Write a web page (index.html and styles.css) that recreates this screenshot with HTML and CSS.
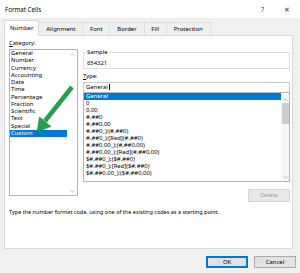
FILE: index.html
```html
<!DOCTYPE html>
<html lang="en">
<head>
  <meta charset="UTF-8" />
  <title>Format Cells</title>
  <link rel="stylesheet" href="styles.css">
</head>
<body>

  <div class="dialog">
    <div class="titlebar">
      <span class="title">Format Cells</span>
      <span class="help">?</span>
      <span class="close">&#x2715;</span>
    </div>

    <div class="tabs">
      <span class="tab active">Number</span>
      <span class="tab">Alignment</span>
      <span class="tab">Font</span>
      <span class="tab">Border</span>
      <span class="tab">Fill</span>
      <span class="tab">Protection</span>
    </div>

    <div class="panel">
      <div class="cols">
        <!-- Category -->
        <div class="col-left">
          <div class="label"><u>C</u>ategory:</div>
          <div class="listbox cat-list">
            <ul class="items">
              <li>General</li>
              <li>Number</li>
              <li>Currency</li>
              <li>Accounting</li>
              <li>Date</li>
              <li>Time</li>
              <li>Percentage</li>
              <li>Fraction</li>
              <li>Scientific</li>
              <li>Text</li>
              <li>Special</li>
              <li class="selected">Custom</li>
            </ul>
            <div class="scroll plain">
              <svg class="chev" viewBox="0 0 6 4"><path d="M0.5 3.5 L3 1 L5.5 3.5" /></svg>
              <svg class="chev" viewBox="0 0 6 4"><path d="M0.5 0.5 L3 3 L5.5 0.5" /></svg>
            </div>
          </div>
        </div>

        <!-- Sample + Type -->
        <div class="col-right">
          <fieldset class="sample">
            <legend>Sample</legend>
            <div>654321</div>
          </fieldset>

          <div class="label type-label"><u>T</u>ype:</div>
          <div class="typebox">General<span class="caret"></span></div>

          <div class="listbox type-list">
            <ul class="items">
              <li class="selected">General</li>
              <li>0</li>
              <li>0.00</li>
              <li>#,##0</li>
              <li>#,##0.00</li>
              <li>#,##0_);(#,##0)</li>
              <li>#,##0_);[Red](#,##0)</li>
              <li>#,##0.00_);(#,##0.00)</li>
              <li>#,##0.00_);[Red](#,##0.00)</li>
              <li>$#,##0_);($#,##0)</li>
              <li>$#,##0_);[Red]($#,##0)</li>
              <li>$#,##0.00_);($#,##0.00)</li>
            </ul>
            <div class="scroll">
              <svg class="chev" viewBox="0 0 6 4"><path d="M0.5 3.5 L3 1 L5.5 3.5" /></svg>
              <div class="track"><div class="thumb"></div></div>
              <svg class="chev" viewBox="0 0 6 4"><path d="M0.5 0.5 L3 3 L5.5 0.5" /></svg>
            </div>
          </div>

          <div class="row-end">
            <span class="btn disabled">Delete</span>
          </div>
        </div>
      </div>

      <p class="desc">Type the number format code, using one of the existing codes as a starting point.</p>
    </div>

    <div class="footer">
      <span class="btn default">OK</span>
      <span class="btn">Cancel</span>
    </div>

    <!-- seta verde por cima da lista -->
    <svg class="arrow" viewBox="0 0 300 273">
      <line x1="72" y1="87" x2="45" y2="121" />
      <polygon points="37,132 51,126.5 39.5,117" />
    </svg>
  </div>

</body>
</html>
```

FILE: styles.css
```css
body {
  margin: 0;
  background: #f0f0f0;
  font-family: "Noto Sans", "Open Sans", sans-serif;
  font-size: 5.9px;
  color: #000;
}

.dialog {
  position: relative;
  width: 300px;
  height: 273px;
  overflow: hidden;
  background: #f0f0f0;
}

.titlebar {
  display: flex;
  align-items: center;
  height: 18px;
  background: #fff;
  padding-left: 5px;
}

.title {
  font-size: 6.2px;
  flex: 1;
}

.help {
  font-size: 6.4px;
  color: #333;
  margin-right: 20px;
}

.close {
  font-size: 7px;
  color: #333;
  margin-right: 10px;
}

.tabs {
  display: flex;
  align-items: flex-end;
  height: 17px;
  padding-left: 4px;
}

.tab {
  height: 13px;
  line-height: 12px;
  padding: 0 6.8px;
  border: 1px solid #e0e0e0;
  border-bottom: none;
  margin-right: -1px;
  background: #f0f0f0;
  font-size: 6px;
  box-sizing: border-box;
}

.tab.active {
  height: 16px;
  line-height: 15px;
  padding: 0 5px;
  background: #fff;
  border-color: #d9d9d9;
  margin-bottom: -1px;
  position: relative;
  z-index: 1;
}

.panel {
  margin: 0 7px 0 4px;
  height: 214px;
  background: #fff;
  border: 1px solid #d9d9d9;
  box-sizing: border-box;
  padding: 3px 0 0 4px;
}

.cols {
  display: flex;
  gap: 5px;
}

.col-left {
  width: 69px;
}

.col-right {
  width: 207px;
}

.label {
  line-height: 8px;
  height: 8px;
  margin-bottom: 2px;
}

.listbox {
  display: flex;
  border: 1px solid #b4b4b4;
  box-sizing: border-box;
  background: #fff;
  overflow: hidden;
}

.cat-list {
  height: 147px;
}

.type-list {
  height: 90px;
}

.items {
  list-style: none;
  margin: 0;
  padding: 0;
  flex: 1;
}

.items li {
  height: 7.27px;
  line-height: 7.27px;
  padding-left: 1px;
  white-space: nowrap;
}

.type-list .items li {
  height: 7px;
  line-height: 7px;
  padding-left: 2px;
}

.items li.selected {
  background: #0078d7;
  color: #fff;
}

.scroll {
  width: 9px;
  display: flex;
  flex-direction: column;
  align-items: center;
  justify-content: space-between;
  padding: 3px 0 2px;
  background: #fff;
}

.scroll.plain {
  width: 10px;
}

.type-list .scroll {
  width: 8px;
  justify-content: flex-start;
  padding: 5px 0 2px;
  background: #f7f7f7;
}

.chev {
  width: 5px;
  height: 3px;
  flex: none;
}

.chev path {
  fill: none;
  stroke: #a0a0a0;
  stroke-width: 1;
}

.track {
  flex: 1;
  width: 100%;
  padding-top: 2px;
}

.thumb {
  width: 7px;
  height: 21px;
  margin: 0 auto;
  background: #cdcdcd;
}

.sample {
  margin: 9px 0 0;
  padding: 3px 3px 1px;
  border: 1px solid #dcdcdc;
  line-height: 8px;
}

.sample legend {
  padding: 0 1px;
  margin-left: -1px;
  line-height: 8px;
}

.type-label {
  margin-top: 3px;
  margin-bottom: 2px;
}

.typebox {
  height: 10px;
  line-height: 9px;
  border: 1px solid #c8c8c8;
  border-bottom: none;
  box-sizing: border-box;
  padding-left: 2px;
}

.caret {
  display: inline-block;
  width: 1px;
  height: 6px;
  background: #000;
  vertical-align: -1px;
  margin-left: 1px;
}

.row-end {
  display: flex;
  justify-content: flex-end;
  margin-top: 7px;
}

.btn {
  display: inline-block;
  width: 42px;
  height: 12px;
  line-height: 10px;
  text-align: center;
  background: #e1e1e1;
  border: 1px solid #adadad;
  box-sizing: border-box;
  font-size: 5.9px;
}

.btn.disabled {
  height: 13px;
  line-height: 11px;
  color: #a0a0a0;
  background: #e8e8e8;
  border-color: #d4d4d4;
}

.btn.default {
  border-color: #0078d7;
  box-shadow: inset 0 0 0 1px #0078d7;
}

.desc {
  margin: 6px 0 0;
  line-height: 8px;
  font-size: 5.5px;
}

.footer {
  display: flex;
  justify-content: flex-end;
  gap: 6px;
  padding: 7px 4px 0 0;
}

.arrow {
  position: absolute;
  left: 0;
  top: 0;
  width: 300px;
  height: 273px;
  pointer-events: none;
}

.arrow line {
  stroke: #25a04a;
  stroke-width: 4.5;
}

.arrow polygon {
  fill: #25a04a;
  stroke: #1f9140;
  stroke-width: 0.6;
  stroke-linejoin: round;
}
```
